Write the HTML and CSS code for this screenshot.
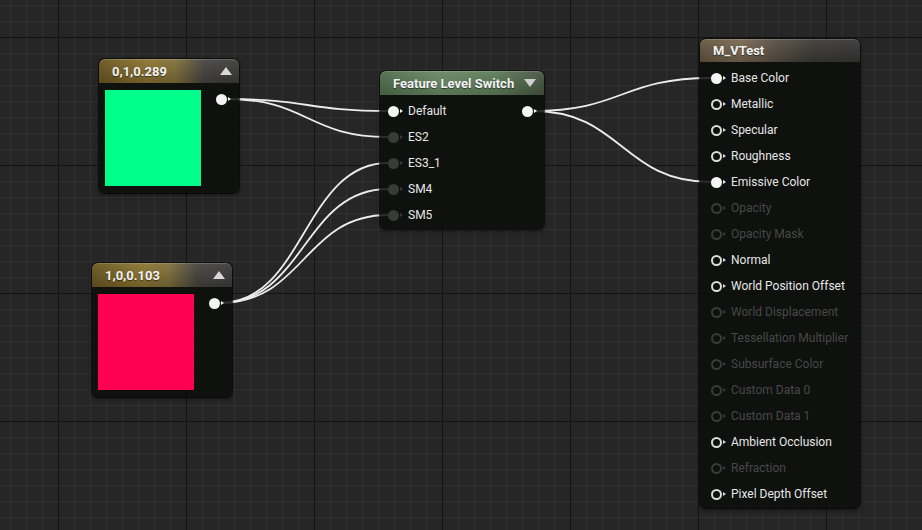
FILE: index.html
```html
<!DOCTYPE html>
<html>
<head>
    <meta charset="UTF-8">
    <title>M_VTest</title>
    <link rel="stylesheet" href="styles.css">
</head>
<body>
<div id="graph">
    <!-- wires sit under the nodes -->
    <svg class="wires" width="922" height="530">
        <path d="M227,99 C307,99 308,111 388,111"/>
        <path d="M227,99 C307,99 308,137 388,137"/>
        <path d="M220,303 C304,303 304,163 388,163"/>
        <path d="M220,303 C304,303 304,189 388,189"/>
        <path d="M220,303 C304,303 304,215 388,215"/>
        <path d="M533,111 C622,111 622,78 711,78"/>
        <path d="M533,111 C622,111 622,182 711,182"/>
    </svg>

    <div class="node const" style="left:99px;top:59px;">
        <div class="head gold">
            <span class="title">0,1,0.289</span>
            <span class="tri-up"></span>
        </div>
        <div class="swatch-row">
            <div class="swatch" style="background:#00ff8a;"></div>
            <span class="pin on"></span>
        </div>
    </div>

    <div class="node const" style="left:92px;top:263px;">
        <div class="head gold">
            <span class="title">1,0,0.103</span>
            <span class="tri-up"></span>
        </div>
        <div class="swatch-row">
            <div class="swatch" style="background:#ff0055;"></div>
            <span class="pin on"></span>
        </div>
    </div>

    <div class="node switch" style="left:380px;top:71px;">
        <div class="head green">
            <span class="title">Feature Level Switch</span>
            <span class="tri-down"></span>
        </div>
        <ul class="pins">
            <li><span class="pin on"></span>Default<span class="pin on out"></span></li>
            <li><span class="pin off"></span>ES2</li>
            <li><span class="pin off"></span>ES3_1</li>
            <li><span class="pin off"></span>SM4</li>
            <li><span class="pin off"></span>SM5</li>
        </ul>
    </div>

    <div class="node result" style="left:700px;top:39px;">
        <div class="head brown">
            <span class="title">M_VTest</span>
        </div>
        <ul class="pins">
            <li><span class="pin on"></span>Base Color</li>
            <li><span class="pin ring"></span>Metallic</li>
            <li><span class="pin ring"></span>Specular</li>
            <li><span class="pin ring"></span>Roughness</li>
            <li><span class="pin on"></span>Emissive Color</li>
            <li class="dim"><span class="pin ring"></span>Opacity</li>
            <li class="dim"><span class="pin ring"></span>Opacity Mask</li>
            <li><span class="pin ring"></span>Normal</li>
            <li><span class="pin ring"></span>World Position Offset</li>
            <li class="dim"><span class="pin ring"></span>World Displacement</li>
            <li class="dim"><span class="pin ring"></span>Tessellation Multiplier</li>
            <li class="dim"><span class="pin ring"></span>Subsurface Color</li>
            <li class="dim"><span class="pin ring"></span>Custom Data 0</li>
            <li class="dim"><span class="pin ring"></span>Custom Data 1</li>
            <li><span class="pin ring"></span>Ambient Occlusion</li>
            <li class="dim"><span class="pin ring"></span>Refraction</li>
            <li><span class="pin ring"></span>Pixel Depth Offset</li>
        </ul>
    </div>
</div>
</body>
</html>
```

FILE: styles.css
```css
* {
    margin: 0;
    padding: 0;
    box-sizing: border-box;
}

body {
    font-family: Roboto, "Liberation Sans", sans-serif;
    background: #262626;
}

ul {
    list-style: none;
}

#graph {
    position: relative;
    width: 922px;
    height: 530px;
    overflow: hidden;
    background-color: #262626;
    background-image:
        linear-gradient(to right, #141414 1px, transparent 1px),
        linear-gradient(to bottom, #141414 1px, transparent 1px),
        linear-gradient(to right, #303030 1px, transparent 1px),
        linear-gradient(to bottom, #303030 1px, transparent 1px);
    background-size: 128px 128px, 128px 128px, 16px 16px, 16px 16px;
    background-position: 58px 0, 0 37px, 10px 0, 0 5px;
}

.wires {
    position: absolute;
    left: 0;
    top: 0;
}

.wires path {
    fill: none;
    stroke: #ececec;
    stroke-width: 1.8;
}

.node {
    position: absolute;
    border-radius: 6px;
    background: rgba(12, 14, 12, 0.86);
    box-shadow: 0 0 0 1px rgba(0, 0, 0, 0.55), 0 2px 4px rgba(0, 0, 0, 0.5);
    color: #e6e6e6;
    font-size: 12px;
}

.head {
    display: flex;
    align-items: center;
    justify-content: space-between;
    height: 24px;
    padding: 0 7px 0 13px;
    border-radius: 6px 6px 0 0;
    box-shadow: inset 0 1px 0 rgba(255, 255, 255, 0.16);
}

.head .title {
    font-size: 13px;
    font-weight: bold;
    color: #f2f2f2;
    text-shadow: 0 1px 1px rgba(0, 0, 0, 0.5);
}

.head.gold {
    background:
        linear-gradient(to bottom, rgba(255, 255, 255, 0.06), rgba(0, 0, 0, 0.18)),
        linear-gradient(to right, #6a5720 0%, #8c7530 35%, #80703a 55%, #474440 75%, #3c3c3c 100%);
}

.head.green {
    background:
        linear-gradient(to bottom, rgba(255, 255, 255, 0.06), rgba(0, 0, 0, 0.15)),
        linear-gradient(to right, #4e6c4a 0%, #678763 35%, #5d7c59 70%, #45543f 100%);
    padding-right: 8px;
}

.head.brown {
    height: 23px;
    background:
        linear-gradient(to bottom, rgba(255, 255, 255, 0.06), rgba(0, 0, 0, 0.18)),
        linear-gradient(to right, #65563f 0%, #7a6953 25%, #5c5246 45%, #3d3b38 70%, #363636 100%);
}

.tri-up {
    width: 0;
    height: 0;
    border-left: 6px solid transparent;
    border-right: 6px solid transparent;
    border-bottom: 8px solid #d8d8d8;
}

.tri-down {
    width: 0;
    height: 0;
    border-left: 6px solid transparent;
    border-right: 6px solid transparent;
    border-top: 8px solid #d0d0d0;
}

/* constant nodes */
.const {
    width: 140px;
    height: 134px;
}

.swatch-row {
    display: flex;
    align-items: flex-start;
    padding: 7px 0 0 6px;
}

.swatch {
    width: 96px;
    height: 96px;
}

.swatch-row .pin {
    margin: 3.5px 0 0 14.5px;
}

/* pins */
.pin {
    position: relative;
    flex: none;
    width: 11px;
    height: 11px;
    border-radius: 50%;
    margin-right: 9px;
}

.pin::after {
    content: '';
    position: absolute;
    top: 3px;
    left: 12px;
    border-top: 2.5px solid transparent;
    border-bottom: 2.5px solid transparent;
    border-left: 3px solid;
}

.pin.on {
    background: #f4f4f4;
}

.pin.on::after {
    border-left-color: #f4f4f4;
}

.pin.off {
    background: #393a39;
}

.pin.off::after {
    border-left-color: #393a39;
}

.pin.ring {
    border: 2px solid #dcdcdc;
}

.pin.ring::after {
    top: 1px;
    left: 10px;
    border-left-color: #dcdcdc;
}

.pins li {
    display: flex;
    align-items: center;
    height: 26px;
}

.pins li.dim {
    color: #474847;
}

.pins li.dim .pin.ring {
    border-color: #3a3b3a;
}

.pins li.dim .pin.ring::after {
    border-left-color: #3a3b3a;
}

/* feature level switch */
.switch {
    width: 164px;
    height: 158px;
}

.switch .pins {
    padding: 3px 11px 1px 8px;
}

.switch .pin.out {
    margin: 0 0 0 auto;
}

/* material result */
.result {
    width: 160px;
    height: 469px;
}

.result .pins {
    padding: 3px 0 1px 11px;
}

.result .pins li {
    white-space: nowrap;
}
```
